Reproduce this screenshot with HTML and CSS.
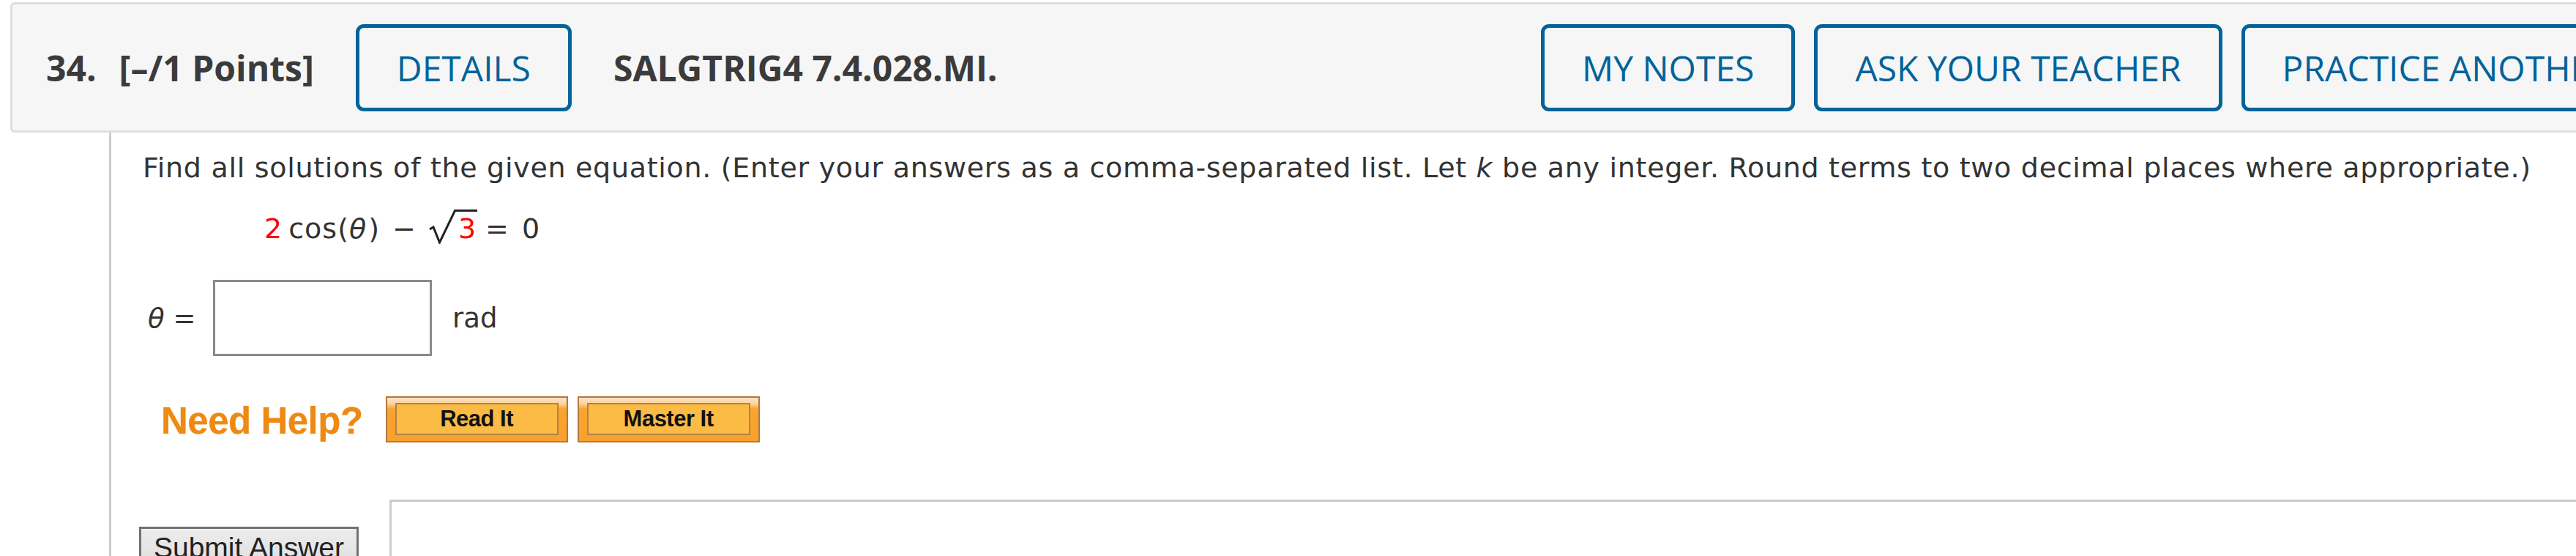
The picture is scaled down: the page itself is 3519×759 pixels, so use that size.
FILE: index.html
```html
<!DOCTYPE html>
<html lang="en">
<head>
<meta charset="utf-8">
<title>Question 34</title>
<link rel="stylesheet" href="styles.css">
</head>
<body>
<div class="page">
  <header class="qhead">
    <div class="qhead-left">
      <span class="qnum">34.</span>
      <span class="qpoints">[–/1 Points]</span>
      <button class="outline-btn details">DETAILS</button>
      <span class="qtitle">SALGTRIG4 7.4.028.MI.</span>
    </div>
    <div class="qhead-actions">
      <button class="outline-btn">MY NOTES</button>
      <button class="outline-btn">ASK YOUR TEACHER</button>
      <button class="outline-btn">PRACTICE ANOTHER</button>
    </div>
  </header>

  <section class="qbody">
    <p class="prompt">Find all solutions of the given equation. (Enter your answers as a comma-separated list. Let <i>k</i> be any integer. Round terms to two decimal places where appropriate.)</p>

    <div class="equation">
      <span class="red n2">2</span><span class="fn">cos(<i class="theta">θ</i>)</span><span class="minus">−</span><span class="sqrt"><svg class="radical" width="37" height="48" viewBox="0 0 37 48"><path d="M1 28 L6 25 L14.5 46 L35.5 2.5 L37 2.5" fill="none" stroke="#222" stroke-width="3" stroke-linejoin="miter"/></svg><span class="radicand red">3</span></span><span class="eq">=</span><span class="zero">0</span>
    </div>

    <div class="answer-row">
      <span class="answer-label"><i>θ</i> =</span>
      <input class="answer-input" type="text" aria-label="theta">
      <span class="unit">rad</span>
    </div>

    <div class="help-row">
      <span class="need-help">Need Help?</span>
      <button class="help-btn"><span>Read It</span></button>
      <button class="help-btn"><span>Master It</span></button>
    </div>

    <div class="submit-row">
      <button class="submit-btn">Submit Answer</button>
      <div class="response-box"></div>
    </div>
  </section>
</div>
</body>
</html>
```

FILE: styles.css
```css
html, body {
  margin: 0;
  padding: 0;
  overflow: hidden;
  background: #ffffff;
}

.page {
  width: 3800px;
  padding-top: 3px;
}

/* ---------- header ---------- */
.qhead {
  margin-left: 14px;
  width: 3700px;
  height: 178px;
  box-sizing: border-box;
  background: #f6f6f6;
  border: 3px solid #dedede;
  border-radius: 6px;
  display: grid;
  grid-template-columns: 2042px auto;
  align-items: center;
  padding-left: 46px;
  font-family: "Open Sans", "Liberation Sans", sans-serif;
  color: #3b3b3b;
}

.qhead-left {
  display: flex;
  align-items: center;
}

.qnum,
.qpoints,
.qtitle {
  font-weight: 700;
  font-size: 48px;
}

.qpoints {
  margin-left: 31px;
}

.details {
  margin-left: 57px;
}

.qtitle {
  margin-left: 57px;
  font-size: 48px;
}

.qhead-actions {
  display: flex;
  gap: 26px;
}

.outline-btn {
  height: 119px;
  box-sizing: border-box;
  border: 5px solid #00639a;
  border-radius: 11px;
  background: transparent;
  color: #00639a;
  font-family: "Open Sans", "Liberation Sans", sans-serif;
  font-size: 48px;
  font-weight: 400;
  padding: 0 51px;
  white-space: nowrap;
}

/* ---------- body ---------- */
.qbody {
  margin-left: 149px;
  border-left: 3px solid #cccccc;
  padding-left: 38px;
  padding-top: 20px;
  min-height: 600px;
  font-family: "DejaVu Sans", Verdana, sans-serif;
  font-size: 37px;
  color: #333333;
}

.prompt {
  margin: 0 0 0 5px;
  line-height: 57px;
  font-size: 38px;
  letter-spacing: 0.7px;
  white-space: nowrap;
}

.red {
  color: #ff0000;
}

.equation {
  margin-top: 26px;
  padding-left: 171px;
  line-height: 57px;
  font-size: 38px;
  white-space: nowrap;
}

.n2 { margin-right: 9px; }
.theta { margin-right: 2px; }
.fn { letter-spacing: 1px; }
.minus { margin: 0 18px 0 17px; }
.eq { margin: 0 18px 0 11px; }

.sqrt {
  display: inline-block;
}

.radical {
  vertical-align: -8px;
}

.radicand {
  display: inline-block;
  line-height: 38px;
  padding-top: 4px;
  padding-left: 3px;
  border-top: 3px solid #222;
  padding-right: 2px;
}

.answer-row {
  margin-top: 41px;
  margin-left: 12px;
  display: flex;
  align-items: center;
  height: 104px;
}

.answer-label {
  width: 89px;
}

.answer-input {
  width: 299px;
  height: 104px;
  box-sizing: border-box;
  border: 3px solid #8a8a8a;
  background: #fff;
  margin: 0;
  padding: 0;
}

.unit {
  margin-left: 28px;
}

/* ---------- help ---------- */
.help-row {
  margin-top: 55px;
  margin-left: 30px;
  display: flex;
  align-items: center;
  height: 63px;
}

.need-help {
  font-family: "Liberation Sans", Arial, sans-serif;
  font-weight: 700;
  font-size: 51px;
  color: #ee8a12;
  letter-spacing: -0.5px;
  text-shadow: 0 0 1px rgba(238, 138, 18, 0.6);
  margin-right: 31px;
  margin-top: 4px;
}

.help-btn {
  width: 249px;
  height: 63px;
  box-sizing: border-box;
  border: 2px solid #b4773a;
  background: linear-gradient(#fde3c2 0%, #fcd3a0 14%, #f9a430 26%, #f9a12c 100%);
  padding: 7px 11px 8px;
  margin: 0 13px 0 0;
}

.help-btn span {
  display: flex;
  align-items: center;
  justify-content: center;
  height: 100%;
  box-sizing: border-box;
  border: 2px solid #b08348;
  background: #fbbb44;
  font-family: "Liberation Sans", Arial, sans-serif;
  font-weight: 700;
  font-size: 31px;
  color: #111;
  letter-spacing: -0.5px;
}

/* ---------- submit ---------- */
.submit-row {
  margin-top: 78px;
  display: flex;
  align-items: flex-start;
}

.submit-btn {
  margin-top: 37px;
  width: 300px;
  box-sizing: border-box;
  border: 3px solid #717171;
  border-bottom: none;
  background: linear-gradient(#ececec, #dcdcdc);
  font-family: "Liberation Sans", Arial, sans-serif;
  font-size: 39px;
  line-height: 39px;
  color: #222;
  padding: 6px 0 20px 0;
  text-align: center;
  display: block;
}

.response-box {
  margin-left: 42px;
  width: 3100px;
  height: 200px;
  border-top: 3px solid #cccccc;
  border-left: 3px solid #cccccc;
}
```
